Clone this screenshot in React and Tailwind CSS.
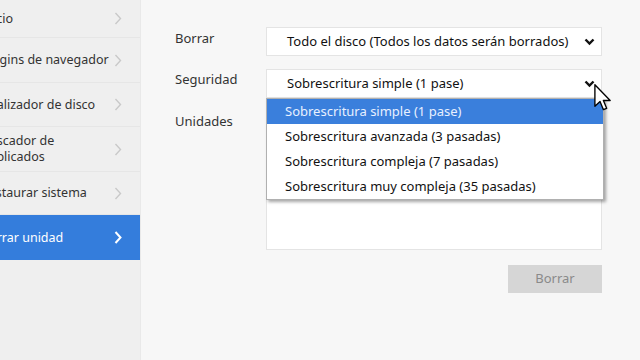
import React from "react";

const Chevron = ({ active }) => (
  <svg width="8" height="13" viewBox="0 0 8 13" className="shrink-0">
    <polyline
      points="1.5,1 6.5,6.5 1.5,12"
      fill="none"
      stroke={active ? "#ffffff" : "#c9c9c9"}
      strokeWidth={active ? 2 : 1.4}
    />
  </svg>
);

const Down = () => (
  <svg width="11" height="8" viewBox="0 0 11 8">
    <polyline points="1.5,1.5 5.5,5.5 9.5,1.5" fill="none" stroke="#111" strokeWidth="2.4" />
  </svg>
);

const items = [
  { label: "Inicio", h: "h-[38px]" },
  { label: "Plugins de navegador", h: "h-[45px]" },
  { label: "Analizador de disco", h: "h-[44px]" },
  { label: ["Buscador de", "duplicados"], h: "h-[45px]" },
  { label: "Restaurar sistema", h: "h-[43px]" },
  { label: "Borrar unidad", h: "h-[45px]", active: true },
];

export default function App() {
  return (
    <div
      className="relative flex h-[360px] w-[640px] overflow-hidden bg-[#f7f7f7] text-[13px] text-[#333]"
      style={{ fontFamily: "'Noto Sans', 'Open Sans', sans-serif" }}
    >
      <div className="w-[141px] shrink-0 overflow-hidden border-r border-[#e9e9e9] bg-[#efefef] text-[12.5px]">
        <div className="-ml-[19px] w-[160px]">
          {items.map((it, i) => (
            <div
              key={i}
              className={`flex items-center justify-between pr-[19px] ${it.h} ${
                it.active ? "bg-[#347ddc] text-white" : "border-b border-[#e6e6e6]"
              }`}
            >
              <div className="leading-[16px] whitespace-nowrap">
                {Array.isArray(it.label) ? it.label.map((l) => <div key={l}>{l}</div>) : it.label}
              </div>
              <Chevron active={it.active} />
            </div>
          ))}
        </div>
      </div>

      <div className="flex-1 pl-[34px] pt-[27px]">
        <div className="flex w-[427px] flex-col">
          <div className="flex items-start">
            <div className="w-[91px] pt-[2px]">Borrar</div>
            <div className="flex h-[29px] flex-1 items-center justify-between border border-[#e4e4e4] bg-white pl-[20px] pr-[6px] text-[#111]">
              <span>Todo el disco (Todos los datos serán borrados)</span>
              <Down />
            </div>
          </div>
          <div className="mt-[13px] flex items-start">
            <div className="w-[91px] pt-[1px]">Seguridad</div>
            <div className="relative flex-1">
              <div className="flex h-[29px] items-center justify-between border border-[#e4e4e4] bg-white pl-[20px] pr-[6px] text-[#111]">
                <span>Sobrescritura simple (1 pase)</span>
                <Down />
              </div>
              <div className="absolute left-0 top-[29px] z-10 w-[338px] border border-[#b0b0b0] bg-white text-[#111] shadow-[2px_2px_3px_rgba(0,0,0,0.35)]">
                <div className="flex h-[25px] items-center bg-[#3a7fdc] pl-[18px] text-[#e8f0ff]">
                  Sobrescritura simple (1 pase)
                </div>
                <div className="flex h-[25px] items-center pl-[18px]">Sobrescritura avanzada (3 pasadas)</div>
                <div className="flex h-[25px] items-center pl-[18px]">Sobrescritura compleja (7 pasadas)</div>
                <div className="flex h-[25px] items-center pl-[18px]">Sobrescritura muy compleja (35 pasadas)</div>
              </div>
            </div>
          </div>
          <div className="mt-[13px] flex items-start">
            <div className="w-[91px] pt-[1px]">Unidades</div>
            <div className="h-[139px] flex-1 border border-[#e4e4e4] bg-white"></div>
          </div>
          <div className="mt-[15px] flex justify-end">
            <div className="flex h-[28px] w-[94px] items-center justify-center bg-[#d6d6d6] text-[#8a8a8a]">
              Borrar
            </div>
          </div>
        </div>
      </div>

      <svg
        className="absolute left-[594px] top-[84px] z-20"
        width="18"
        height="27"
        viewBox="0 0 13 20"
      >
        <path
          d="M0.5,0.5 L0.5,16.5 L4.3,13 L6.8,19 L9.2,18 L6.8,12.2 L11.8,12.2 Z"
          fill="white"
          stroke="black"
          strokeWidth="1"
          strokeLinejoin="round"
        />
      </svg>
    </div>
  );
}
